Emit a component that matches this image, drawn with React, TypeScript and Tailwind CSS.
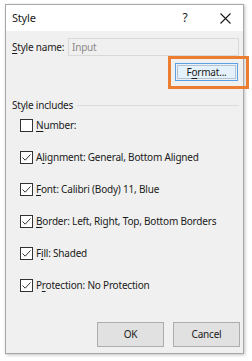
import React from "react";

const font = { fontFamily: '"Noto Sans", "Open Sans", sans-serif' };

function Check({ checked }: { checked: boolean }) {
    return (
        <span className="w-[13px] h-[13px] border border-[#333333] bg-white flex items-center justify-center shrink-0">
            {checked && (
                <svg width="11" height="11" viewBox="0 0 11 11" fill="none">
                    <path d="M1.5 5.5 L4.2 8.2 L9.5 2.5" stroke="#333333" strokeWidth="1" />
                </svg>
            )}
        </span>
    );
}

const ROWS = [
    { checked: false, pre: "", key: "N", post: "umber:" },
    { checked: true, pre: "A", key: "l", post: "ignment: General, Bottom Aligned" },
    { checked: true, pre: "", key: "F", post: "ont: Calibri (Body) 11, Blue" },
    { checked: true, pre: "", key: "B", post: "order: Left, Right, Top, Bottom Borders" },
    { checked: true, pre: "F", key: "i", post: "ll: Shaded" },
    { checked: true, pre: "P", key: "r", post: "otection: No Protection" },
];

export default function App() {
    return (
        <div className="w-[252px] h-[361px] bg-white pt-[4px] pl-[5px]" style={font}>
            <div className="w-[239px] h-[350px] border border-[#a8a8a8] bg-[#f0f0f0] flex flex-col shadow-[1px_1px_3px_rgba(0,0,0,0.25)]">
                {/* Title bar */}
                <div className="h-[26px] bg-white flex items-center pl-[6px] text-[11px] tracking-[-0.2px] text-[#1a1a1a]">
                    <span className="flex-1">Style</span>
                    <span className="w-[14px] text-center mr-[28px] text-[12px]">?</span>
                    <svg width="11" height="11" viewBox="0 0 11 11" className="mr-[12px]">
                        <path d="M0.5 0.5 L10.5 10.5 M10.5 0.5 L0.5 10.5" stroke="#1a1a1a" strokeWidth="1.1" />
                    </svg>
                </div>

                {/* Body */}
                <div className="flex-1 flex flex-col px-[6px] text-[10px] tracking-[-0.2px] text-[#1a1a1a] whitespace-nowrap">
                    <div className="flex items-center mt-[7px] h-[18px]">
                        <span className="w-[56px]">
                            <span className="underline underline-offset-2">S</span>tyle name:
                        </span>
                        <div className="flex-1 h-[18px] border border-[#d9d9d9] bg-[#f0f0f0] text-[#8a8a8a] pl-[3px] flex items-center mr-[-2px]">
                            Input
                        </div>
                    </div>

                    <div className="flex justify-end mr-[-12px]">
                        <div className="border-[3px] border-[#ed7d31] pl-[4px] pr-[8px] pt-[4px] pb-[5px]">
                            <div className="w-[63px] h-[18px] border border-[#5aa0e6] p-[1px]">
                                <div className="h-full border border-[#adc4dc] bg-[#e5f1fb] flex items-center justify-center">
                                    F<span className="underline underline-offset-2">o</span>rmat...
                                </div>
                            </div>
                        </div>
                    </div>

                    <div className="flex items-center mt-[8px] h-[16px]">
                        <span>Style includes</span>
                        <div className="flex-1 h-px bg-[#dcdcdc] ml-[4px] mr-[-2px]" />
                    </div>

                    <div className="flex flex-col mt-[-4px]">
                        {ROWS.map((r) => (
                            <div key={r.post} className="h-[32px] flex items-center pl-[8px] gap-[3px]">
                                <Check checked={r.checked} />
                                <span>
                                    {r.pre}
                                    <span className="underline underline-offset-2">{r.key}</span>
                                    {r.post}
                                </span>
                            </div>
                        ))}
                    </div>

                    <div className="flex justify-end gap-[9px] mt-auto mb-[6px] mr-[-3px]">
                        <button className="w-[67px] h-[25px] bg-[#e1e1e1] border border-[#adadad]">
                            OK
                        </button>
                        <button className="w-[67px] h-[25px] bg-[#e1e1e1] border border-[#adadad]">
                            Cancel
                        </button>
                    </div>
                </div>
            </div>
        </div>
    );
}
